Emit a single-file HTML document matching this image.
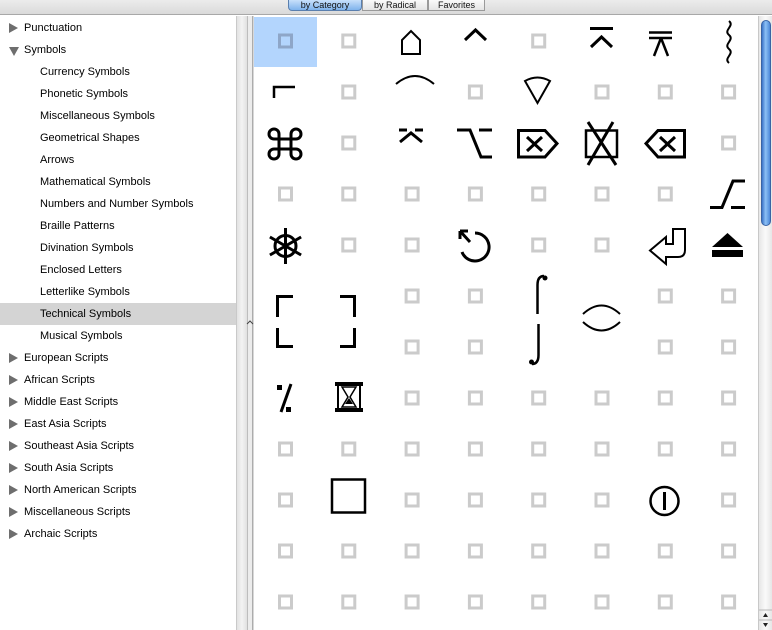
<!DOCTYPE html>
<html><head><meta charset="utf-8"><style>
*{margin:0;padding:0;box-sizing:border-box}
body{width:772px;height:630px;overflow:hidden;background:#fff;font-family:"Liberation Sans",sans-serif;position:relative}
.top{position:absolute;left:0;top:0;width:772px;height:15px;background:linear-gradient(#ececec,#dadada);border-bottom:1px solid #a8a8a8}
.tab{position:absolute;top:0;height:11px;font-size:9px;line-height:10px;text-align:center;color:#111;background:linear-gradient(#fafafa,#e4e4e4);border:1px solid #9a9a9a;border-top:none}
.tab.sel{background:linear-gradient(#c8e0fb,#7fb3ec);border-color:#5a7fae;border-radius:0 0 4px 4px}
.side{position:absolute;left:0;top:17px;width:236px;height:613px;background:#fff}
.it{position:absolute;left:0;width:236px;height:22px;font-size:11px;line-height:22px;color:#000}
.it.sel{background:#d4d4d4}
.tri{position:absolute;left:9px;top:6px;width:0;height:0}
.tri.r{border-top:5px solid transparent;border-bottom:5px solid transparent;border-left:9px solid #6e6e6e}
.tri.d{top:8px;border-left:5px solid transparent;border-right:5px solid transparent;border-top:9px solid #6e6e6e}
.split{position:absolute;left:236px;top:16px;width:11px;height:614px;background:linear-gradient(90deg,#e2e2e2,#f3f3f3,#e0e0e0);border-left:1px solid #c9c9c9}
.split2{position:absolute;left:247px;top:16px;width:6px;height:614px;background:#ececec;border-left:1px solid #bdbdbd;border-right:1px solid #a9a9a9}
.sb{position:absolute;left:758px;top:16px;width:14px;height:614px;background:linear-gradient(90deg,#e6e6e6,#fafafa,#e6e6e6);border-left:1px solid #c8c8c8}
.thumb{position:absolute;left:761px;top:20px;width:10px;height:206px;border-radius:5px;background:linear-gradient(90deg,#3b73c8,#8cc0f5 45%,#4c88d8);border:1px solid #3a64a4}
</style></head><body>
<div class="top"></div>
<div class="tab sel" style="left:288px;width:74px">by Category</div>
<div class="tab" style="left:362px;width:66px">by Radical</div>
<div class="tab" style="left:428px;width:57px">Favorites</div>

<div class="side">
<div class="it" style="top:0"><span class="tri r"></span><span style="margin-left:24px">Punctuation</span></div>
<div class="it" style="top:22px"><span class="tri d"></span><span style="margin-left:24px">Symbols</span></div>
<div class="it" style="top:44px"><span style="margin-left:40px">Currency Symbols</span></div>
<div class="it" style="top:66px"><span style="margin-left:40px">Phonetic Symbols</span></div>
<div class="it" style="top:88px"><span style="margin-left:40px">Miscellaneous Symbols</span></div>
<div class="it" style="top:110px"><span style="margin-left:40px">Geometrical Shapes</span></div>
<div class="it" style="top:132px"><span style="margin-left:40px">Arrows</span></div>
<div class="it" style="top:154px"><span style="margin-left:40px">Mathematical Symbols</span></div>
<div class="it" style="top:176px"><span style="margin-left:40px">Numbers and Number Symbols</span></div>
<div class="it" style="top:198px"><span style="margin-left:40px">Braille Patterns</span></div>
<div class="it" style="top:220px"><span style="margin-left:40px">Divination Symbols</span></div>
<div class="it" style="top:242px"><span style="margin-left:40px">Enclosed Letters</span></div>
<div class="it" style="top:264px"><span style="margin-left:40px">Letterlike Symbols</span></div>
<div class="it sel" style="top:286px"><span style="margin-left:40px">Technical Symbols</span></div>
<div class="it" style="top:308px"><span style="margin-left:40px">Musical Symbols</span></div>
<div class="it" style="top:330px"><span class="tri r"></span><span style="margin-left:24px">European Scripts</span></div>
<div class="it" style="top:352px"><span class="tri r"></span><span style="margin-left:24px">African Scripts</span></div>
<div class="it" style="top:374px"><span class="tri r"></span><span style="margin-left:24px">Middle East Scripts</span></div>
<div class="it" style="top:396px"><span class="tri r"></span><span style="margin-left:24px">East Asia Scripts</span></div>
<div class="it" style="top:418px"><span class="tri r"></span><span style="margin-left:24px">Southeast Asia Scripts</span></div>
<div class="it" style="top:440px"><span class="tri r"></span><span style="margin-left:24px">South Asia Scripts</span></div>
<div class="it" style="top:462px"><span class="tri r"></span><span style="margin-left:24px">North American Scripts</span></div>
<div class="it" style="top:484px"><span class="tri r"></span><span style="margin-left:24px">Miscellaneous Scripts</span></div>
<div class="it" style="top:506px"><span class="tri r"></span><span style="margin-left:24px">Archaic Scripts</span></div>
</div>
<div class="split"></div>
<div class="split2"></div>
<div class="sb"></div>
<div class="thumb"></div>

<svg style="position:absolute;left:0;top:0" width="772" height="630" viewBox="0 0 772 630">
<defs><rect id="b" x="-6" y="-6" width="12" height="12" fill="none" stroke="#cbcbcb" stroke-width="3"/></defs>
<rect x="254" y="17" width="63" height="50" fill="#b3d5fd"/>
<rect x="279.5" y="35" width="12" height="12" fill="none" stroke="#8ea6c8" stroke-width="3"/>
<g>
<use href="#b" x="348.8" y="41"/><use href="#b" x="538.7" y="41"/>
<use href="#b" x="348.8" y="92"/><use href="#b" x="475.4" y="92"/><use href="#b" x="602" y="92"/><use href="#b" x="665.3" y="92"/><use href="#b" x="728.6" y="92"/>
<use href="#b" x="348.8" y="143"/><use href="#b" x="728.6" y="143"/>
<use href="#b" x="285.5" y="194"/><use href="#b" x="348.8" y="194"/><use href="#b" x="412.1" y="194"/><use href="#b" x="475.4" y="194"/><use href="#b" x="538.7" y="194"/><use href="#b" x="602" y="194"/><use href="#b" x="665.3" y="194"/>
<use href="#b" x="348.8" y="245"/><use href="#b" x="412.1" y="245"/><use href="#b" x="538.7" y="245"/><use href="#b" x="602" y="245"/>
<use href="#b" x="412.1" y="296"/><use href="#b" x="475.4" y="296"/><use href="#b" x="665.3" y="296"/><use href="#b" x="728.6" y="296"/>
<use href="#b" x="412.1" y="347"/><use href="#b" x="475.4" y="347"/><use href="#b" x="665.3" y="347"/><use href="#b" x="728.6" y="347"/>
<use href="#b" x="412.1" y="398"/><use href="#b" x="475.4" y="398"/><use href="#b" x="538.7" y="398"/><use href="#b" x="602" y="398"/><use href="#b" x="665.3" y="398"/><use href="#b" x="728.6" y="398"/>
<use href="#b" x="285.5" y="449"/><use href="#b" x="348.8" y="449"/><use href="#b" x="412.1" y="449"/><use href="#b" x="475.4" y="449"/><use href="#b" x="538.7" y="449"/><use href="#b" x="602" y="449"/><use href="#b" x="665.3" y="449"/><use href="#b" x="728.6" y="449"/>
<use href="#b" x="285.5" y="500"/><use href="#b" x="412.1" y="500"/><use href="#b" x="475.4" y="500"/><use href="#b" x="538.7" y="500"/><use href="#b" x="602" y="500"/><use href="#b" x="728.6" y="500"/>
<use href="#b" x="285.5" y="551"/><use href="#b" x="348.8" y="551"/><use href="#b" x="412.1" y="551"/><use href="#b" x="475.4" y="551"/><use href="#b" x="538.7" y="551"/><use href="#b" x="602" y="551"/><use href="#b" x="665.3" y="551"/><use href="#b" x="728.6" y="551"/>
<use href="#b" x="285.5" y="602"/><use href="#b" x="348.8" y="602"/><use href="#b" x="412.1" y="602"/><use href="#b" x="475.4" y="602"/><use href="#b" x="538.7" y="602"/><use href="#b" x="602" y="602"/><use href="#b" x="665.3" y="602"/><use href="#b" x="728.6" y="602"/>
</g>
<g fill="none" stroke="#000" stroke-width="3" stroke-linejoin="miter">
<path d="M402,54 V40 L411,31 L420,40 V54 Z" stroke-width="2"/>
<path d="M465,40 L475.5,30 L486,40"/>
<path d="M590,28.5 H613 M591,47 L601.5,37 L612,47"/>
<path d="M649,32.5 H672 M649,38 H672 M661,38 L654,56 M661,38 L668,56" stroke-width="2.5"/>
<path d="M729,21 C735,26 723,30 729,35 C735,40 723,44 729,49 C735,54 723,58 729,63" stroke-width="2"/>
<path d="M274,98 V87 H295" stroke-width="2.5"/>
<path d="M396,84 Q415,68 434,84" stroke-width="2"/>
<path d="M525,81 Q537.5,74 550,81 L537.5,103 Z" stroke-width="2"/>
<path d="M279,154 V134 A5,5 0 1 0 274,139 H296 A5,5 0 1 0 291,134 V154 A5,5 0 1 0 296,149 H274 A5,5 0 1 0 279,154 Z"/>
<path d="M399,130 H407 M415,130 H423 M400,142 L411,133 L422,142"/>
<path d="M457,130 H470 L481,157 H492 M479,130 H492"/>
<path d="M518.5,130.5 H545 L557,143.5 L545,157 H518.5 Z M527,137 L542,151 M542,137 L527,151"/>
<path d="M586,130.5 H617 V157 H586 Z" stroke-width="2.5"/>
<path d="M588,122 L616,165 M613,122 L588,165"/>
<path d="M684.5,130.5 H658 L646,143.5 L658,157 H684.5 Z M660,137 L675,151 M675,137 L660,151"/>
<path d="M710,207.5 H722 L733,181 H745 M731,207.5 H745"/>
<circle cx="285.5" cy="246" r="10.5"/>
<path d="M285.5,228 V264 M269.9,237 L301.1,255 M269.9,255 L301.1,237"/>
<path d="M475,233 A14,14 0 1 1 462,252"/>
<path d="M470,242 L460,231 M460,231 V239 M460,231 H468"/>
<path d="M673,229 H685 V250 Q685,257 678,257 H666 V264 L650,250.5 L666,237 V244 H673 Z" stroke-width="2" fill="#fff"/>
<path d="M277.5,317 V296.5 H293"/>
<path d="M340,296.5 H354.5 V317"/>
<path d="M277.5,328 V346.5 H293"/>
<path d="M340,346.5 H354.5 V328"/>
<path d="M537.5,314 V285 Q537.5,276 544,276" stroke-width="2.5"/>
<path d="M538.5,324 V355 Q538.5,364 532,364" stroke-width="2.5"/>
<path d="M583,314 Q601.5,297 620,314 M583,322 Q601.5,339 620,322" stroke-width="2"/>
<path d="M291,384 L281,412" stroke-width="3"/>
<rect x="332" y="479.5" width="33" height="33" stroke-width="2.5"/>
<circle cx="664.5" cy="501" r="14" stroke-width="2.5"/>
<path d="M664.5,492 V510"/>
</g>
<g fill="#000">
<circle cx="545" cy="278" r="2.5"/><circle cx="531.5" cy="362" r="2.5"/>
<path d="M712,247 L727.5,233 L743,247 Z"/><rect x="712" y="250" width="31" height="7"/>
<rect x="277" y="385" width="5" height="5"/><rect x="286" y="407" width="5" height="5"/>
<rect x="335" y="382" width="28" height="4"/><rect x="335" y="408" width="28" height="4"/>
<rect x="337" y="386" width="2" height="22"/><rect x="359" y="386" width="2" height="22"/>
<path d="M342,387 H356 L350,397 L356,407 H342 L348,397 Z" fill="none" stroke="#000" stroke-width="1.5"/>
<path d="M345,404 H353 L349,398 Z"/>
</g>
<path d="M253,16 V630" stroke="#b0b0b0" stroke-width="1"/>
<path d="M759,610 H772 M759,620 H772" stroke="#b8b8b8"/>
<path d="M763,617 L765.5,613 L768,617 Z M763,623 L768,623 L765.5,627 Z" fill="#222"/>
<path d="M247,324 L250,321 L253,324" fill="none" stroke="#444" stroke-width="1"/>
</svg>
</body></html>
